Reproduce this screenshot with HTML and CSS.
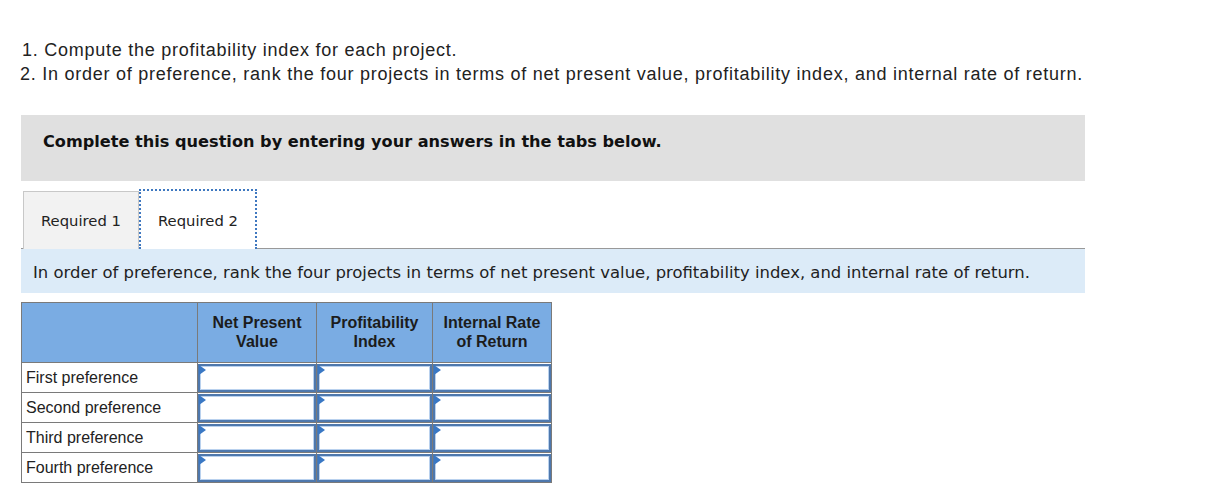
FILE: index.html
```html
<!DOCTYPE html>
<html>
<head>
<meta charset="utf-8">
<link rel="stylesheet" href="styles.css">
</head>
<body>
<div class="page">
  <div class="intro">
    <div class="l1">1. Compute the profitability index for each project.</div>
    <div>2. In order of preference, rank the four projects in terms of net present value, profitability index, and internal rate of return.</div>
  </div>
  <div class="banner">Complete this question by entering your answers in the tabs below.</div>
  <div class="tabs">
    <div class="tab">Required 1</div>
    <div class="tab active">Required 2</div>
    <div class="tabfill"></div>
  </div>
  <div class="panel">In order of preference, rank the four projects in terms of net present value, profitability index, and internal rate of return.</div>
  <table class="grid">
    <tr class="head">
      <th class="c0"></th>
      <th class="c1">Net Present<br>Value</th>
      <th class="c2">Profitability<br>Index</th>
      <th class="c3">Internal Rate<br>of Return</th>
    </tr>
    <tr><td class="lbl">First preference</td><td class="in"><div class="box"></div></td><td class="in"><div class="box"></div></td><td class="in"><div class="box"></div></td></tr>
    <tr><td class="lbl">Second preference</td><td class="in"><div class="box"></div></td><td class="in"><div class="box"></div></td><td class="in"><div class="box"></div></td></tr>
    <tr><td class="lbl">Third preference</td><td class="in"><div class="box"></div></td><td class="in"><div class="box"></div></td><td class="in"><div class="box"></div></td></tr>
    <tr><td class="lbl">Fourth preference</td><td class="in"><div class="box"></div></td><td class="in"><div class="box"></div></td><td class="in"><div class="box"></div></td></tr>
  </table>
</div>
</body>
</html>
```
FILE: styles.css
```css
html, body { margin: 0; padding: 0; background: #fff; }
.page { padding: 38px 0 0 21px; width: 1064px; }
.intro {
  font-family: "Liberation Sans", Arial, sans-serif;
  font-size: 18px;
  letter-spacing: 0.75px;
  line-height: 24px;
  color: #222;
  margin-left: -1px;
}
.intro .l1 { padding-left: 2px; }
.banner {
  margin-top: 29px;
  height: 66px;
  box-sizing: border-box;
  background: #e0e0e0;
  padding: 17px 0 0 22px;
  font-family: "DejaVu Sans", Verdana, sans-serif;
  font-weight: bold;
  font-size: 16.15px;
  color: #111;
}
.tabs {
  display: flex;
  align-items: flex-end;
  margin-top: 8px;
  height: 60px;
  border-bottom: 1px solid #999;
  box-sizing: border-box;
  padding-left: 2px;
}
.tab {
  font-family: "DejaVu Sans", Verdana, sans-serif;
  font-size: 14.8px;
  color: #222;
  width: 116px;
  height: 58px;
  box-sizing: border-box;
  background: #f2f2f2;
  border: 1px solid #c8c8c8;
  border-bottom: none;
  display: flex;
  align-items: center;
  justify-content: center;
  margin-bottom: -1px;
}
.tab.active {
  background: #fff;
  height: 60px;
  width: 118px;
  border: 2px dotted #3f78c0;
  border-bottom: none;
  padding-top: 1px;
}
.tabfill { flex: 1; }
.panel {
  background: #dcebf8;
  height: 44px;
  box-sizing: border-box;
  padding: 14px 0 0 12px;
  font-family: "DejaVu Sans", Verdana, sans-serif;
  font-size: 16.45px;
  color: #222;
}
.grid {
  margin-top: 9px;
  border-collapse: collapse;
  font-family: "Liberation Sans", Arial, sans-serif;
  font-size: 16px;
  color: #222;
}
.grid th, .grid td { border: 1px solid #7a7a7a; padding: 0; }
.head th {
  background: #7aace3;
  height: 60px;
  font-weight: bold;
  line-height: 19px;
  vertical-align: top;
  padding-top: 10px;
  box-sizing: border-box;
  color: #1c1c1c;
}
.c0 { width: 176px; }
.c1 { width: 119px; }
.c2 { width: 116px; }
.c3 { width: 119px; }
.grid td { height: 30px; box-sizing: border-box; }
.lbl { padding-left: 4px !important; padding-top: 0 !important; vertical-align: middle; }
.in { position: relative; }
.box {
  position: relative;
  height: 28px;
  box-sizing: border-box;
  border: 2px solid #4e78ad;
  box-shadow: inset 0 0 0 1px #b9d1ee;
  background: #fff;
}
.box::before {
  content: "";
  position: absolute;
  left: -1px;
  top: -1px;
  border-left: 7px solid #3a78c4;
  border-top: 5px solid transparent;
  border-bottom: 5px solid transparent;
}
```
